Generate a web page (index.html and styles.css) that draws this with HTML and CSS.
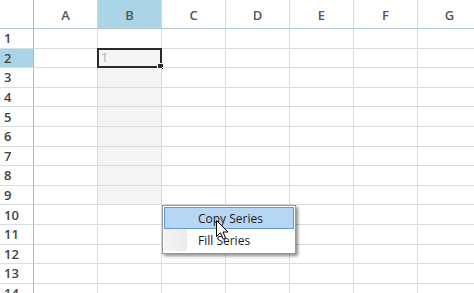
FILE: index.html
```html
<!DOCTYPE html>
<html>
<head>
<meta charset="utf-8">
<link rel="stylesheet" href="styles.css">
</head>
<body>
<div class="sheet">
  <div class="grid">
    <div class="ch corner"></div>
    <div class="ch">A</div><div class="ch sel">B</div><div class="ch">C</div><div class="ch">D</div><div class="ch">E</div><div class="ch">F</div><div class="ch">G</div>

    <div class="rh">1</div><div class="c"></div><div class="c"></div><div class="c"></div><div class="c"></div><div class="c"></div><div class="c"></div><div class="c"></div>
    <div class="rh sel">2</div><div class="c"></div><div class="c active"><span class="val">1</span><span class="handle"></span></div><div class="c"></div><div class="c"></div><div class="c"></div><div class="c"></div><div class="c"></div>
    <div class="rh">3</div><div class="c"></div><div class="c fill"></div><div class="c"></div><div class="c"></div><div class="c"></div><div class="c"></div><div class="c"></div>
    <div class="rh">4</div><div class="c"></div><div class="c fill"></div><div class="c"></div><div class="c"></div><div class="c"></div><div class="c"></div><div class="c"></div>
    <div class="rh">5</div><div class="c"></div><div class="c fill"></div><div class="c"></div><div class="c"></div><div class="c"></div><div class="c"></div><div class="c"></div>
    <div class="rh">6</div><div class="c"></div><div class="c fill"></div><div class="c"></div><div class="c"></div><div class="c"></div><div class="c"></div><div class="c"></div>
    <div class="rh">7</div><div class="c"></div><div class="c fill"></div><div class="c"></div><div class="c"></div><div class="c"></div><div class="c"></div><div class="c"></div>
    <div class="rh">8</div><div class="c"></div><div class="c fill"></div><div class="c"></div><div class="c"></div><div class="c"></div><div class="c"></div><div class="c"></div>
    <div class="rh">9</div><div class="c"></div><div class="c fill"></div><div class="c"></div><div class="c"></div><div class="c"></div><div class="c"></div><div class="c"></div>
    <div class="rh">10</div><div class="c"></div><div class="c"></div><div class="c"></div><div class="c"></div><div class="c"></div><div class="c"></div><div class="c"></div>
    <div class="rh">11</div><div class="c"></div><div class="c"></div><div class="c"></div><div class="c"></div><div class="c"></div><div class="c"></div><div class="c"></div>
    <div class="rh">12</div><div class="c"></div><div class="c"></div><div class="c"></div><div class="c"></div><div class="c"></div><div class="c"></div><div class="c"></div>
    <div class="rh">13</div><div class="c"></div><div class="c"></div><div class="c"></div><div class="c"></div><div class="c"></div><div class="c"></div><div class="c"></div>
    <div class="rh">14</div><div class="c"></div><div class="c"></div><div class="c"></div><div class="c"></div><div class="c"></div><div class="c"></div><div class="c"></div>
  </div>

  <div class="menu">
    <div class="item hover">Copy Series</div>
    <div class="item"><span class="gutter"></span>Fill Series</div>
  </div>

  <svg class="cursor" width="13" height="21" viewBox="0 0 13 21">
    <path d="M0.5 0.5 L0.5 16.5 L4.5 12.8 L7.2 19.2 L9.6 18.2 L7 12 L12 12 Z" fill="#fff" stroke="#000" stroke-width="1" stroke-linejoin="miter"/>
  </svg>
</div>
</body>
</html>
```

FILE: styles.css
```css
html, body {
  margin: 0;
  padding: 0;
  background: #fff;
  overflow: hidden;
}

.sheet {
  position: relative;
  width: 474px;
  height: 293px;
  overflow: hidden;
  font-family: "Open Sans", "Noto Sans", sans-serif;
}

.grid {
  display: grid;
  grid-template-columns: 34px repeat(7, 64px);
  grid-template-rows: 29px repeat(14, 19.6px);
  width: max-content;
}

.ch {
  border-right: 1px solid #c9d9e6;
  border-bottom: 1px solid #b7c8d6;
  display: flex;
  align-items: center;
  justify-content: center;
  font-size: 13px;
  font-weight: 600;
  color: #555;
  padding-top: 1px;
  box-sizing: border-box;
}

.ch.corner {
  border-right: 1px solid #a9bccc;
}

.ch.sel {
  background: #aad5e6;
}

.rh {
  border-right: 1px solid #a9bccc;
  border-bottom: 1px solid #d6dee6;
  display: flex;
  align-items: center;
  padding-left: 4px;
  font-size: 13px;
  font-weight: 600;
  color: #444;
  box-sizing: border-box;
}

.rh.sel {
  background: #aad5e6;
}

.c {
  border-right: 1px solid #dadada;
  border-bottom: 1px solid #dadada;
  box-sizing: border-box;
  position: relative;
}

.c.fill {
  background: #f4f4f4;
}

.c.active {
  background: #f5f5f5;
  border: 2px solid #2b2b2b;
  margin: -1px 0 0 -1px;
  width: calc(100% + 1px);
  height: calc(100% + 1px);
  display: flex;
  align-items: center;
  padding-left: 2px;
}

.val {
  font-size: 12.5px;
  color: #b0b0b0;
}

.handle {
  position: absolute;
  right: -4px;
  bottom: -4px;
  width: 5px;
  height: 5px;
  background: #2b2b2b;
  border: 1px solid #fff;
}

.menu {
  position: absolute;
  left: 162px;
  top: 205px;
  width: 134px;
  box-sizing: border-box;
  background: #fff;
  border: 1px solid #9a9a9a;
  box-shadow: 2px 2px 3px rgba(0, 0, 0, 0.45);
  padding: 1px 1px 2px 1px;
}

.item {
  position: relative;
  height: 22px;
  box-sizing: border-box;
  padding-left: 34px;
  display: flex;
  align-items: center;
  font-size: 12px;
  color: #1a1a1a;
}

.item.hover {
  background: #b6d7f3;
  border: 1px solid #5b9bd7;
  padding-left: 33px;
}

.gutter {
  position: absolute;
  left: 0;
  top: 0;
  bottom: 0;
  width: 23px;
  background: linear-gradient(to right, #f4f4f4, #ececec);
}

.cursor {
  position: absolute;
  left: 216px;
  top: 220px;
}
```
